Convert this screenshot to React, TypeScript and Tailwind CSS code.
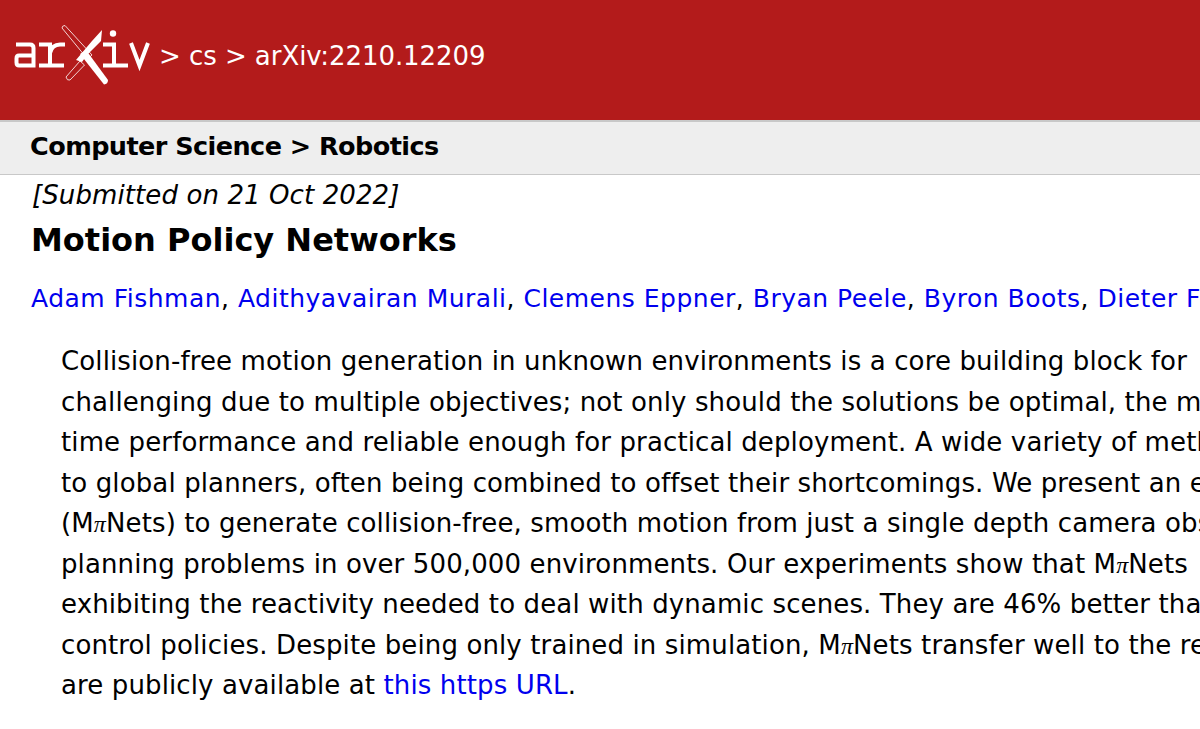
const authors = ["Adam Fishman", "Adithyavairan Murali", "Clemens Eppner", "Bryan Peele", "Byron Boots", "Dieter Fox"];

const Pi = () => <span className="font-['Liberation_Serif',serif] text-[24px] italic leading-none">π</span>;

const abstractLines = [
  <>Collision-free motion generation in unknown environments is a core building block for</>,
  <>challenging due to multiple objectives; not only should the solutions be optimal, the motion</>,
  <>time performance and reliable enough for practical deployment. A wide variety of methods</>,
  <>to global planners, often being combined to offset their shortcomings. We present an end-to-end</>,
  <>(M<Pi />Nets) to generate collision-free, smooth motion from just a single depth camera observation</>,
  <>planning problems in over 500,000 environments. Our experiments show that M<Pi />Nets</>,
  <>exhibiting the reactivity needed to deal with dynamic scenes. They are 46% better than</>,
  <>control policies. Despite being only trained in simulation, M<Pi />Nets transfer well to the real</>,
  <>are publicly available at <a className="text-[#0000ee]">this https URL</a>.</>,
];

const Logo = () => (
  <svg width="150" height="90" viewBox="0 0 150 90" className="shrink-0">
    {/* thin outlined blade of the X */}
    <path d="M62 28 Q62 25.5 65 25.5 L92 55 L87.5 59 Z" fill="none" stroke="#f2d4d4" strokeWidth="1" />
    <path d="M80 61 L84.5 65 L70 80 Q67 81 66 77 Z" fill="none" stroke="#f2d4d4" strokeWidth="1" />
    {/* solid blades of the X */}
    <path d="M76 60 L92 41 L102 30 L101 41 L87 55 L82 62 Z" fill="#fff" />
    <path d="M80 54 L86 50 L108 80 Q108 84 104 84.5 Z" fill="#fff" />
    <g fill="none" stroke="#fff" strokeWidth="4">
      {/* a */}
      <path d="M16 44.5 H30 Q33.5 44.5 33.5 48 V65.5 H19 Q16.5 65.5 16.5 62.5 V58.5 Q16.5 55.5 19 55.5 H33.5" />
      {/* r */}
      <path d="M39 44.5 H50 V65.5 M39 65.5 H64 M50 53 Q52 44.5 60 44.5 H65" />
      {/* i */}
      <path d="M103 44.5 H114 V65.5 M103 65.5 H128" />
      {/* v */}
      <path d="M131 43 L139.5 65.5 L148 43" />
    </g>
    <circle cx="113" cy="33.5" r="3.2" fill="#fff" />
  </svg>
);

export default function App() {
  return (
    <div className="h-[729px] w-[1200px] overflow-hidden bg-white font-['DejaVu_Sans',sans-serif] text-black">
      <header className="flex h-[120px] items-start bg-[#b31b1b] text-white">
        <Logo />
        <div className="ml-[9px] mt-[40px] whitespace-nowrap text-[26px] leading-[32px] tracking-[-0.05px]">
          &gt; cs &gt; arXiv:2210.12209
        </div>
      </header>
      <nav className="flex h-[55px] items-center whitespace-nowrap border-y border-y-[#c8c8c8] border-t-2 bg-[#eeeeee] pb-[3px] pl-[30px] text-[25.5px] font-bold tracking-[-0.55px]">
        Computer Science &gt; Robotics
      </nav>
      <main className="pl-[31px]">
        <p className="ml-[1px] mt-[3px] whitespace-nowrap text-[26px] italic leading-[34px] tracking-[0.1px]">[Submitted on 21 Oct 2022]</p>
        <h1 className="mt-[7px] whitespace-nowrap text-[32px] font-bold leading-[42px]">Motion Policy Networks</h1>
        <div className="mt-[18px] whitespace-nowrap text-[25px] leading-[40px] tracking-[0.5px]">
          {authors.map((name, i) => (
            <span key={name}>
              <a className="text-[#0000ee]">{name}</a>
              {i < authors.length - 1 ? ", " : ""}
            </span>
          ))}
        </div>
        <blockquote className="mt-[22px] whitespace-nowrap pl-[30px] text-[26px] leading-[40.5px] tracking-[0.12px]">
          {abstractLines.map((line, i) => (
            <div key={i} className="h-[40.5px]">{line}</div>
          ))}
        </blockquote>
      </main>
    </div>
  );
}
